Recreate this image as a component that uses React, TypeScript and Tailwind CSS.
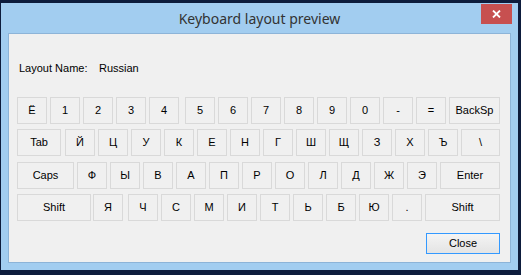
import React from "react";

type Key = { label: string; w: number; gap: number };

// each key: label, width, space before it (px)
const rows: { keys: Key[]; mt: string }[] = [
  {
    mt: "mt-0",
    keys: [
      { label: "Ё", w: 30, gap: 0 },
      { label: "1", w: 30, gap: 3 },
      { label: "2", w: 30, gap: 3 },
      { label: "3", w: 30, gap: 3 },
      { label: "4", w: 30, gap: 3 },
      { label: "5", w: 30, gap: 6 },
      { label: "6", w: 30, gap: 3 },
      { label: "7", w: 30, gap: 3 },
      { label: "8", w: 30, gap: 3 },
      { label: "9", w: 30, gap: 3 },
      { label: "0", w: 30, gap: 3 },
      { label: "-", w: 30, gap: 3 },
      { label: "=", w: 30, gap: 3 },
      { label: "BackSp", w: 51, gap: 3 },
    ],
  },
  {
    mt: "mt-[5px]",
    keys: [
      { label: "Tab", w: 44, gap: 0 },
      { label: "Й", w: 30, gap: 4 },
      { label: "Ц", w: 30, gap: 3 },
      { label: "У", w: 30, gap: 3 },
      { label: "К", w: 30, gap: 3 },
      { label: "Е", w: 30, gap: 3 },
      { label: "Н", w: 30, gap: 3 },
      { label: "Г", w: 30, gap: 3 },
      { label: "Ш", w: 30, gap: 3 },
      { label: "Щ", w: 30, gap: 3 },
      { label: "З", w: 30, gap: 3 },
      { label: "Х", w: 30, gap: 3 },
      { label: "Ъ", w: 30, gap: 3 },
      { label: "\\", w: 39, gap: 3 },
    ],
  },
  {
    mt: "mt-[6px]",
    keys: [
      { label: "Caps", w: 57, gap: 0 },
      { label: "Ф", w: 30, gap: 3 },
      { label: "Ы", w: 30, gap: 3 },
      { label: "В", w: 30, gap: 3 },
      { label: "А", w: 30, gap: 3 },
      { label: "П", w: 30, gap: 3 },
      { label: "Р", w: 30, gap: 3 },
      { label: "О", w: 30, gap: 3 },
      { label: "Л", w: 30, gap: 3 },
      { label: "Д", w: 30, gap: 3 },
      { label: "Ж", w: 30, gap: 3 },
      { label: "Э", w: 30, gap: 3 },
      { label: "Enter", w: 60, gap: 3 },
    ],
  },
  {
    mt: "mt-[5px]",
    keys: [
      { label: "Shift", w: 74, gap: 0 },
      { label: "Я", w: 30, gap: 2 },
      { label: "Ч", w: 30, gap: 5 },
      { label: "С", w: 30, gap: 3 },
      { label: "М", w: 30, gap: 3 },
      { label: "И", w: 30, gap: 3 },
      { label: "Т", w: 30, gap: 3 },
      { label: "Ь", w: 30, gap: 3 },
      { label: "Б", w: 30, gap: 3 },
      { label: "Ю", w: 30, gap: 3 },
      { label: ".", w: 30, gap: 3 },
      { label: "Shift", w: 75, gap: 3 },
    ],
  },
];

const KeyButton = ({ k }: { k: Key }) => (
  <div
    className="h-[27px] shrink-0 flex items-center justify-center border border-[#d9d9d9] bg-[#f0f0f0] text-[11px] text-black"
    style={{ width: k.w, marginLeft: k.gap }}
  >
    {k.label}
  </div>
);

export default function App() {
  return (
    <div className="w-[521px] h-[275px] bg-[#0d1c3c] pt-[3px] pl-[1px] font-['Liberation_Sans',Arial,sans-serif] overflow-hidden">
      <div className="w-[517px] h-[267px] bg-[#a2cdf0] flex flex-col">
        {/* title bar */}
        <div className="relative h-[29px] flex items-center justify-center">
          <span className="text-[14px] text-[#333333] font-['Noto_Sans',sans-serif] mt-[2px]">
            Keyboard layout preview
          </span>
          <div className="absolute top-[1px] right-[6px] w-[31px] h-[20px] bg-[#c75050] flex items-center justify-center">
            <svg width="9" height="8" viewBox="0 0 9 8">
              <path d="M1 0.5 L8 7.5 M8 0.5 L1 7.5" stroke="white" strokeWidth="1.8" />
            </svg>
          </div>
        </div>
        {/* client area */}
        <div className="ml-[7px] mt-[1px] w-[503px] h-[230px] border border-[#8db4d8] bg-[#f0f0f0] flex flex-col">
          <div className="mt-[26px] h-[16px] pl-[10px] flex items-center text-[11px] text-black">
            <span className="w-[80px]">Layout Name:</span>
            <span>Russian</span>
          </div>
          <div className="mt-[21px] pl-[8px] flex flex-col">
            {rows.map((row, i) => (
              <div key={i} className={`flex ${row.mt}`}>
                {row.keys.map((k, j) => (
                  <KeyButton key={j} k={k} />
                ))}
              </div>
            ))}
          </div>
          <div className="mt-[12px] flex justify-end pr-[10px]">
            <div className="w-[74px] h-[21px] border border-[#3399ff] bg-gradient-to-b from-[#f4f4f4] to-[#e4e4e4] flex items-center justify-center text-[11px] text-black">
              Close
            </div>
          </div>
        </div>
      </div>
    </div>
  );
}
